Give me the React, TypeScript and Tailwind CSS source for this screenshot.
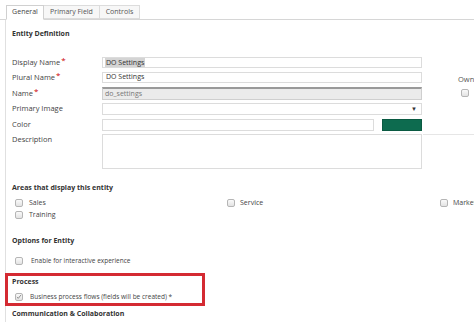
import React from "react";

const Box = ({ checked = false }: { checked?: boolean }) => (
  <span className="relative block h-[8px] w-[8px] shrink-0 rounded-[2px] border border-[#b5b5b5] bg-gradient-to-b from-[#fafafa] to-[#e3e3e3]">
    {checked && (
      <svg viewBox="0 0 8 8" className="absolute left-0 top-0 h-[6px] w-[6px]">
        <path d="M1.2 4 L3 5.8 L6.8 1.2" stroke="#8a8a8a" strokeWidth="1.3" fill="none" />
      </svg>
    )}
  </span>
);

const Label = ({ text, req = false }: { text: string; req?: boolean }) => (
  <div className="w-[90px] shrink-0 text-[7.5px] leading-none text-[#444]">
    {text}
    {req && <span className="relative -top-[2px] ml-[1px] text-[8px] text-[#c00]">*</span>}
  </div>
);

export default function App() {
  return (
    <div
      className="relative h-[322px] w-[474px] overflow-hidden bg-white text-[#333]"
      style={{ fontFamily: '"Open Sans", "Noto Sans", sans-serif' }}
    >
      {/* Tabs */}
      <div className="flex border-b border-[#d6d6d6] pl-[6px] pt-[5px]">
        <div className="-mb-px flex h-[15px] w-[38px] items-center justify-center border border-b-white border-[#d0d0d0] bg-white text-[7px] text-[#444]">
          General
        </div>
        <div className="flex h-[14px] w-[56px] items-center justify-center border border-l-0 border-[#dcdcdc] bg-[#f7f7f7] text-[7px] text-[#555]">
          Primary Field
        </div>
        <div className="flex h-[14px] w-[40px] items-center justify-center border border-l-0 border-[#dcdcdc] bg-[#f7f7f7] text-[7px] text-[#555]">
          Controls
        </div>
      </div>

      {/* Panel */}
      <div className="ml-[5px] h-[310px] border-l border-[#e0e0e0] pl-[6px]">
        <div className="pt-[9px] text-[7px] font-bold leading-[10px] text-[#333]">Entity Definition</div>

        <div className="relative mt-[18px] flex">
          <div className="flex w-[411px] shrink-0 flex-col">
            <div className="flex h-[15px] items-start">
              <div className="flex h-[11px] items-center"><Label text="Display Name" req /></div>
              <div className="flex h-[11px] w-[320px] items-center border border-[#dcdcdc] bg-white pl-[2px] text-[7px] text-[#333]">
                <span className="bg-[#d4d4d4] px-[1px] leading-[9px]">DO Settings</span>
              </div>
            </div>
            <div className="flex h-[15px] items-start">
              <div className="flex h-[11px] items-center"><Label text="Plural Name" req /></div>
              <div className="flex h-[11px] w-[320px] items-center border border-[#dcdcdc] bg-white pl-[3px] text-[7px] text-[#333]">
                DO Settings
              </div>
            </div>
            <div className="flex h-[16px] items-start">
              <div className="flex h-[13px] items-center"><Label text="Name" req /></div>
              <div className="flex h-[13px] w-[320px] items-center border border-t-2 border-[#cfcfcf] border-t-[#9a9a9a] bg-[#ebebeb] pl-[2px] text-[7px] text-[#777]">
                do_settings
              </div>
            </div>
            <div className="flex h-[16px] items-start">
              <div className="flex h-[12px] items-center"><Label text="Primary Image" /></div>
              <div className="flex h-[12px] w-[320px] items-center justify-end border border-[#dcdcdc] bg-white pr-[4px] text-[6px] text-[#333]">
                ▼
              </div>
            </div>
            <div className="flex h-[15px] items-start">
              <div className="flex h-[12px] items-center"><Label text="Color" /></div>
              <div className="h-[12px] w-[272px] border border-[#dcdcdc] bg-white" />
              <div className="ml-[8px] h-[12px] w-[40px] border border-[#0a5a42] bg-[#0d6b4f]" />
            </div>
            <div className="flex h-[36px] items-start">
              <div className="flex h-[12px] items-center"><Label text="Description" /></div>
              <div className="h-[35px] w-[320px] border border-[#dcdcdc] bg-white" />
            </div>
          </div>
          <div className="ml-[35px] flex shrink-0 flex-col pt-[17px]">
            <div className="whitespace-nowrap text-[7.5px] leading-[10px] text-[#555]">Owner</div>
            <div className="ml-[3px] mt-[5px] flex"><Box /></div>
          </div>
          <div className="absolute left-[411px] top-[77px] h-px w-[60px] bg-[#e6e6e6]" />
        </div>

        <div className="mt-[13px] text-[7px] font-bold leading-[10px] text-[#333]">Areas that display this entity</div>
        <div className="mt-[4px] flex h-[12px] items-center">
          <div className="flex w-[215px] shrink-0 items-center pl-[3px]">
            <Box />
            <span className="ml-[6px] text-[7px] text-[#444]">Sales</span>
          </div>
          <div className="flex w-[213px] shrink-0 items-center">
            <Box />
            <span className="ml-[5px] text-[7px] text-[#444]">Service</span>
          </div>
          <div className="flex shrink-0 items-center">
            <Box />
            <span className="ml-[5px] whitespace-nowrap text-[7px] text-[#444]">Marketing</span>
          </div>
        </div>
        <div className="flex h-[12px] items-center pl-[3px]">
          <Box />
          <span className="ml-[6px] text-[7px] text-[#444]">Training</span>
        </div>

        <div className="mt-[15px] text-[7px] font-bold leading-[10px] text-[#333]">Options for Entity</div>
        <div className="mt-[9px] flex h-[12px] items-center pl-[3px]">
          <Box />
          <span className="ml-[8px] text-[6.5px] text-[#444]">Enable for interactive experience</span>
        </div>

        <div className="-ml-[7px] mt-[6px] h-[33px] w-[200px] border-[3px] border-[#d42a32] pl-[4px]">
          <div className="pt-[1px] text-[7px] font-bold leading-[10px] text-[#333]">Process</div>
          <div className="mt-[4px] flex h-[12px] items-center pl-[3px]">
            <Box checked />
            <span className="ml-[7px] text-[6.5px] text-[#444]">Business process flows (fields will be created) *</span>
          </div>
        </div>
        <div className="mt-[3px] text-[7px] font-bold leading-[10px] text-[#333]">Communication &amp; Collaboration</div>
      </div>
    </div>
  );
}
